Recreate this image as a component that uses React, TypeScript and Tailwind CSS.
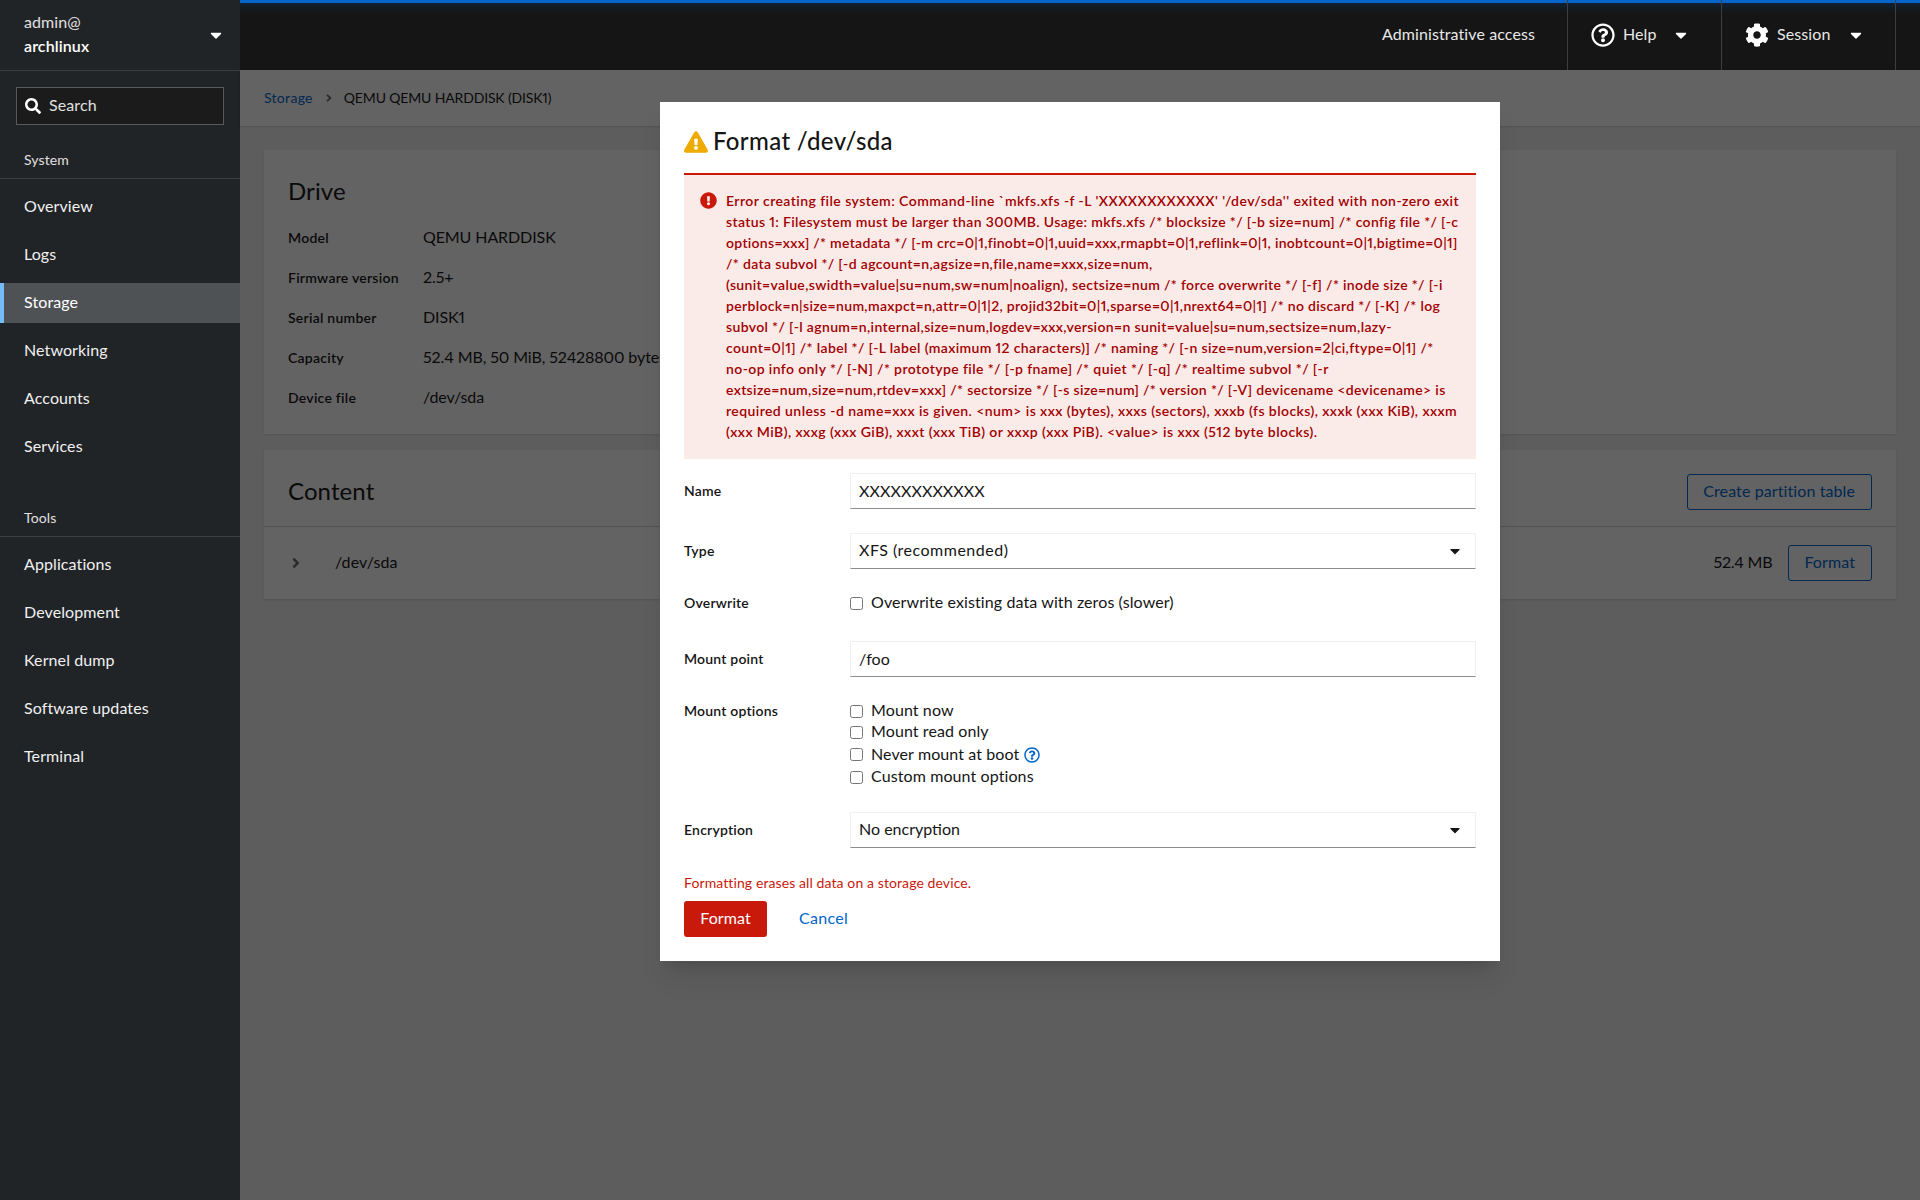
import { FaCaretDown, FaAngleRight, FaCog, FaExclamationCircle, FaExclamationTriangle, FaRegQuestionCircle, FaSearch } from "react-icons/fa"

// Lato runs a little differently from the original font, so each line keeps its own tracking
const errorLines = [
  { text: "Error creating file system: Command-line `mkfs.xfs -f -L 'XXXXXXXXXXXX' '/dev/sda'' exited with non-zero exit", tracking: "tracking-[0.44px]" },
  { text: "status 1: Filesystem must be larger than 300MB. Usage: mkfs.xfs /* blocksize */ [-b size=num] /* config file */ [-c", tracking: "tracking-[0.35px]" },
  { text: "options=xxx] /* metadata */ [-m crc=0|1,finobt=0|1,uuid=xxx,rmapbt=0|1,reflink=0|1, inobtcount=0|1,bigtime=0|1]", tracking: "tracking-[0.3px]" },
  { text: "/* data subvol */ [-d agcount=n,agsize=n,file,name=xxx,size=num,", tracking: "tracking-[0.36px]" },
  { text: "(sunit=value,swidth=value|su=num,sw=num|noalign), sectsize=num /* force overwrite */ [-f] /* inode size */ [-i", tracking: "tracking-[0.35px]" },
  { text: "perblock=n|size=num,maxpct=n,attr=0|1|2, projid32bit=0|1,sparse=0|1,nrext64=0|1] /* no discard */ [-K] /* log", tracking: "tracking-[0.33px]" },
  { text: "subvol */ [-l agnum=n,internal,size=num,logdev=xxx,version=n sunit=value|su=num,sectsize=num,lazy-", tracking: "tracking-[0.35px]" },
  { text: "count=0|1] /* label */ [-L label (maximum 12 characters)] /* naming */ [-n size=num,version=2|ci,ftype=0|1] /*", tracking: "tracking-[0.365px]" },
  { text: "no-op info only */ [-N] /* prototype file */ [-p fname] /* quiet */ [-q] /* realtime subvol */ [-r", tracking: "tracking-[0.395px]" },
  { text: "extsize=num,size=num,rtdev=xxx] /* sectorsize */ [-s size=num] /* version */ [-V] devicename <devicename> is", tracking: "tracking-[0.34px]" },
  { text: "required unless -d name=xxx is given. <num> is xxx (bytes), xxxs (sectors), xxxb (fs blocks), xxxk (xxx KiB), xxxm", tracking: "tracking-[0.42px]" },
  { text: "(xxx MiB), xxxg (xxx GiB), xxxt (xxx TiB) or xxxp (xxx PiB). <value> is xxx (512 byte blocks).", tracking: "tracking-[0.43px]" },
]

const driveRows = [
  ["Model", "QEMU HARDDISK"],
  ["Firmware version", "2.5+"],
  ["Serial number", "DISK1"],
  ["Capacity", "52.4 MB, 50 MiB, 52428800 bytes"],
  ["Device file", "/dev/sda"],
]

function NavItem({ label, active }: { label: string; active?: boolean }) {
  return (
    <div
      className={
        active
          ? "h-10 mb-2 pb-[2px] flex items-center pl-5 border-l-4 border-[#73bcf7] bg-[#4f5255] text-white"
          : "h-10 mb-2 pb-[2px] flex items-center pl-6 text-[#f0f0f0]"
      }
    >
      {label}
    </div>
  )
}

function NavGroup({ title, items }: { title: string; items: string[] }) {
  return (
    <div>
      <div className="px-6 pb-2 text-sm leading-[21px] text-[#e0e0e0] border-b border-[#3c3f42]">{title}</div>
      <div className="pt-2">
        {items.map((item) => (
          <NavItem key={item} label={item} active={item === "Storage"} />
        ))}
      </div>
    </div>
  )
}

function Sidebar() {
  return (
    <aside className="w-[240px] shrink-0 h-full bg-[#212427] text-white">
      <div className="h-[71px] border-b border-[#3c3f42] pl-6 pr-[15px] flex items-center justify-between">
        <div className="-mt-[3px]">
          <div className="text-[#e0e0e0] leading-6">admin@</div>
          <div className="font-semibold leading-6">archlinux</div>
        </div>
        <FaCaretDown className="w-[18px] h-[18px]" />
      </div>
      <div className="mt-4 mx-4 h-[38px] bg-[#1b1b1b] border border-[#57595b] flex items-center pl-2 gap-2">
        <FaSearch className="w-4 h-4" />
        <span className="text-[#e0e0e0] pb-[2px]">Search</span>
      </div>
      <div className="mt-6">
        <NavGroup title="System" items={["Overview", "Logs", "Storage", "Networking", "Accounts", "Services"]} />
      </div>
      <div className="mt-10">
        <NavGroup title="Tools" items={["Applications", "Development", "Kernel dump", "Software updates", "Terminal"]} />
      </div>
    </aside>
  )
}

function Topbar() {
  return (
    <header className="relative h-[70px] shrink-0 text-[#e8e8e8] flex justify-end pr-6 bg-[linear-gradient(to_bottom,#06c_0,#06c_3px,#10202f_3px,#151515_14px,#151515_100%)]">
      <div className="flex items-center pr-8 pb-[2px]">Administrative access</div>
      <div className="w-[154px] border-l border-[#3c3f42] flex items-center pl-[23px] box-border">
        <FaRegQuestionCircle className="w-6 h-6 text-white" />
        <span className="ml-2 pb-[2px]">Help</span>
        <FaCaretDown className="ml-[15px] w-[18px] h-[18px] text-white" />
      </div>
      <div className="w-[175px] border-l border-r border-[#3c3f42] flex items-center pl-[23px] box-border">
        <FaCog className="w-6 h-6 text-white" />
        <span className="ml-2 pb-[2px]">Session</span>
        <FaCaretDown className="ml-[17px] w-[18px] h-[18px] text-white" />
      </div>
    </header>
  )
}

function OutlineButton({ label }: { label: string }) {
  return <button className="h-9 pl-[15px] pr-4 pb-[2px] rounded-[3px] border border-[#06c] text-[#06c]">{label}</button>
}

function Page() {
  return (
    <div className="h-full bg-[#f0f0f0] text-[#151515]">
      <div className="h-[56px] bg-white shadow-sm px-6 flex items-center text-sm">
        <span className="text-[#06c] tracking-[0.3px]">Storage</span>
        <FaAngleRight className="ml-[10px] mr-[9px] w-3 h-3 text-[#6a6e73]" />
        <span className="tracking-[-0.15px]">QEMU QEMU HARDDISK (DISK1)</span>
      </div>
      <div className="mx-6 mt-6 bg-white shadow-sm h-[284px] p-6">
        <div className="h-9 flex items-center text-2xl pb-[2px]">Drive</div>
        <div className="mt-4 flex flex-col gap-4">
          {driveRows.map(([label, value]) => (
            <div key={label} className="h-6 flex items-center">
              <div className="w-[135px] text-sm font-semibold tracking-[0.25px]">{label}</div>
              <div className="pb-[2px] tracking-[-0.1px]">{value}</div>
            </div>
          ))}
        </div>
      </div>
      <div className="mx-6 mt-4 bg-white shadow-sm h-[149px]">
        <div className="pt-6 pb-4 px-6 flex items-center justify-between border-b border-[#d2d2d2]">
          <div className="text-2xl pb-[2px]">Content</div>
          <OutlineButton label="Create partition table" />
        </div>
        <div className="h-[72px] px-6 flex items-center">
          <FaAngleRight className="w-4 h-4 text-[#6a6e73]" />
          <span className="ml-[31px] pb-[2px]">/dev/sda</span>
          <span className="ml-auto mr-4 pb-[2px] tracking-[-0.2px]">52.4 MB</span>
          <OutlineButton label="Format" />
        </div>
      </div>
    </div>
  )
}

function Input({ value }: { value: string }) {
  return (
    <input
      readOnly
      defaultValue={value}
      className="flex-1 min-w-0 h-9 px-2 pb-[2px] border border-[#f0f0f0] border-b-[#8a8d90] text-[#151515] outline-none"
    />
  )
}

function Select({ value, tracking }: { value: string; tracking: string }) {
  return (
    <div className="flex-1 h-9 pl-2 pr-3 border border-[#f0f0f0] border-b-[#8a8d90] flex items-center justify-between text-[#151515]">
      <span className={"pb-[2px] " + tracking}>{value}</span>
      <FaCaretDown className="w-4 h-4" />
    </div>
  )
}

function FormRow({ label, className, children }: { label: string; className?: string; children: React.ReactNode }) {
  return (
    <div className={"flex " + (className ?? "")}>
      <div className="w-[166px] shrink-0 text-sm font-semibold tracking-[0.2px] text-[#151515]">{label}</div>
      {children}
    </div>
  )
}

function Check({ label, className, tight, children }: { label: string; className: string; tight?: boolean; children?: React.ReactNode }) {
  return (
    <label className={"flex items-center " + className}>
      <input type="checkbox" className="m-0 w-[13px] h-[13px]" />
      <span className={tight ? "ml-2 pb-[4px]" : "ml-2 pb-[2px]"}>{label}</span>
      {children}
    </label>
  )
}

function FormatDialog() {
  return (
    <div className="w-[840px] h-[859px] bg-white shadow-xl px-6 pt-6 pb-6">
      <div className="h-8 flex items-center">
        <FaExclamationTriangle className="w-6 h-6 text-[#f0ab00]" />
        <h1 className="ml-[5px] text-2xl font-medium tracking-[0.35px] text-[#151515] pb-[2px]">Format /dev/sda</h1>
      </div>
      <div className="mt-[15px] border-t-2 border-[#c9190b] bg-[#faeae8] h-[286px] pt-[15px] pl-4 flex">
        <FaExclamationCircle className="mt-[2px] w-[17px] h-[17px] text-[#c9190b] shrink-0" />
        <div className="ml-[9px] text-sm font-semibold leading-[21px] text-[#a30000]">
          {errorLines.map((line) => (
            <div key={line.text} className={"whitespace-nowrap " + line.tracking}>{line.text}</div>
          ))}
        </div>
      </div>
      <FormRow label="Name" className="mt-[14px] items-center">
        <Input value="XXXXXXXXXXXX" />
      </FormRow>
      <FormRow label="Type" className="mt-6 items-center">
        <Select value="XFS (recommended)" tracking="tracking-[0.5px]" />
      </FormRow>
      <FormRow label="Overwrite" className="mt-[22px] h-6 items-center">
        <Check label="Overwrite existing data with zeros (slower)" className="text-[#151515]" />
      </FormRow>
      <FormRow label="Mount point" className="mt-[26px] items-center">
        <Input value="/foo" />
      </FormRow>
      <FormRow label="Mount options" className="mt-6 leading-[21px]">
        <div className="text-[#151515]">
          <Check label="Mount now" className="h-[21px]" tight />
          <Check label="Mount read only" className="h-[21px]" tight />
          <Check label="Never mount at boot" className="h-[23px]">
            <FaRegQuestionCircle className="ml-[5px] w-4 h-4 text-[#06c]" />
          </Check>
          <Check label="Custom mount options" className="h-[22px]" tight />
        </div>
      </FormRow>
      <FormRow label="Encryption" className="mt-6 items-center">
        <Select value="No encryption" tracking="tracking-[0px]" />
      </FormRow>
      <div className="mt-[24px] text-sm leading-[21px] tracking-[0.1px] text-[#c9190b]">Formatting erases all data on a storage device.</div>
      <div className="mt-[8px] flex items-center">
        <button className="h-9 w-[83px] pb-[2px] rounded-[3px] bg-[#c9190b] text-white">Format</button>
        <button className="ml-8 pb-[2px] text-[#06c] tracking-[0.3px]">Cancel</button>
      </div>
    </div>
  )
}

export default function App() {
  return (
    <div className="w-screen h-screen overflow-hidden flex font-['Lato','Liberation_Sans',sans-serif] text-base tracking-[0.1px] proportional-nums">
      <Sidebar />
      <div className="flex-1 min-w-0 flex flex-col">
        <Topbar />
        <main className="relative flex-1 min-h-0">
          <Page />
          <div className="absolute inset-0 bg-[#030303]/[0.62] flex justify-center pt-8">
            <FormatDialog />
          </div>
        </main>
      </div>
    </div>
  )
}
